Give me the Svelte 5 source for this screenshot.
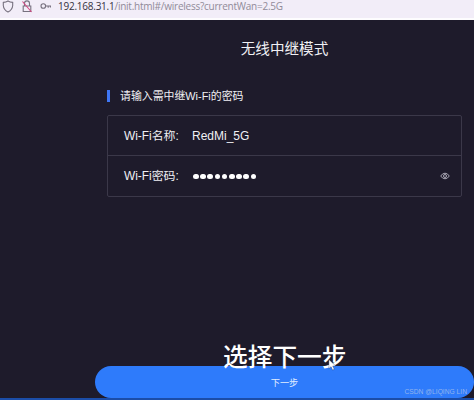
<script lang="ts">
	let host = '192.168.31.1';
	let path = '/init.html#/wireless?currentWan=2.5G';
	let ssid = 'RedMi_5G';
	let password = '123456789';
</script>

<div class="screen">
	<header class="address-bar">
		<svg class="shield" viewBox="0 0 12 13">
			<path d="M6 1 Q8 2.2 10.7 2.4 V5.5 Q10.4 9.8 6 12 Q1.6 9.8 1.3 5.5 V2.4 Q4 2.2 6 1Z" />
		</svg>
		<svg class="lock" viewBox="0 0 12 13">
			<path d="M3.5 6V3.4a2.5 2.5 0 0 1 5 0V6M2.2 6h7.6v5.5H2.2z" />
			<path class="slash" d="M1.5 1.5l9 10.5" />
		</svg>
		<svg class="key" viewBox="0 0 12 10">
			<circle cx="3.3" cy="5" r="2.3" />
			<path d="M5.6 5H11M8.2 5v1.8M10.4 5v1.6" />
		</svg>
		<span class="url"><b>{host}</b>{path}</span>
	</header>

	<main>
		<h1>无线中继模式</h1>
		<h2><span>请输入需中继Wi-Fi的密码</span></h2>
		<div class="fields">
			<div class="field">
				<span class="label">Wi-Fi名称:</span>
				<span class="value">{ssid}</span>
			</div>
			<div class="field">
				<span class="label">Wi-Fi密码:</span>
				<span class="dots">
					{#each password as _}
						<i></i>
					{/each}
				</span>
				<svg class="eye" viewBox="0 0 10 8">
					<path d="M.7 4Q2.5 1.2 5 1.2T9.3 4Q7.5 6.8 5 6.8T.7 4Z" />
					<circle cx="5" cy="4" r="1.5" />
				</svg>
			</div>
		</div>
	</main>

	<button>下一步</button>

	<p class="caption">选择下一步</p>
	<svg class="cursor" viewBox="0 0 10 13">
		<path d="M1 .5v10l2.4-2.2 1.7 3.8 1.8-.8-1.7-3.7h3.4z" />
	</svg>
	<span class="watermark">CSDN @LIQING LIN</span>
</div>

<style>
	:global(body) {
		margin: 0;
	}
	.screen {
		position: relative;
		display: flex;
		flex-direction: column;
		box-sizing: border-box;
		width: 474px;
		height: 400px;
		overflow: hidden;
		background: #1e1b2b;
		border-bottom: 2px solid #1b4da8;
		color: #f0f0f4;
		font-family: 'Liberation Sans', 'Noto Sans CJK SC', sans-serif;
	}
	.address-bar {
		flex: none;
		display: flex;
		align-items: center;
		box-sizing: border-box;
		height: 20px;
		padding: 0 0 6px 2px;
		background: #f2edf8;
		border-bottom: 2px solid #fdfcfe;
	}
	.address-bar svg {
		flex: none;
		fill: none;
		stroke: #77717f;
		stroke-width: 1.1;
	}
	.shield {
		width: 12px;
		height: 13px;
	}
	.lock {
		width: 12px;
		height: 13px;
		margin-left: 7px;
	}
	.address-bar .slash {
		stroke: #d6457f;
	}
	.key {
		width: 12px;
		height: 10px;
		margin-left: 7px;
	}
	.url {
		margin-left: 6px;
		font-family: 'Open Sans', 'Noto Sans', sans-serif;
		font-size: 10px;
		letter-spacing: -0.24px;
		line-height: 13px;
		color: #918b99;
		white-space: nowrap;
	}
	.url b {
		font-weight: 500;
		color: #36323e;
	}
	main {
		flex: 1;
		padding: 0 12px 0 107px;
	}
	h1 {
		margin: 18px 0 0;
		font-size: 14.6px;
		line-height: 22px;
		font-weight: 400;
		text-align: center;
	}
	h2 {
		display: flex;
		align-items: center;
		height: 12px;
		margin: 30px 0 13px;
		padding-left: 11px;
		border-left: 3px solid #3f76f4;
		font-size: 10.9px;
		line-height: 14px;
		font-weight: 400;
		white-space: nowrap;
	}
	h2 span {
		margin-left: -1px;
	}
	.fields {
		border: 1px solid #3b3849;
		border-radius: 2px;
	}
	.field {
		display: flex;
		align-items: center;
		box-sizing: border-box;
		height: 39px;
		padding: 0 11px 0 16px;
		font-size: 12px;
		line-height: 16px;
		white-space: nowrap;
	}
	.field + .field {
		height: 41px;
		border-top: 1px solid #3b3849;
	}
	.label {
		width: 68px;
		font-size: 11.9px;
	}
	.dots {
		display: flex;
		gap: 1.6px;
		padding: 1px 0 0 1px;
	}
	.dots i {
		width: 5.6px;
		height: 5.6px;
		border-radius: 50%;
		background: #fff;
	}
	.eye {
		width: 10px;
		height: 8px;
		margin-left: auto;
		fill: none;
		stroke: #aaa7b5;
		stroke-width: 1;
	}
	button {
		flex: none;
		height: 32px;
		margin: 0 0 0 95px;
		padding: 0;
		border: 0;
		border-radius: 16px;
		background: #2e7bfb;
		color: #e3edff;
		font-family: inherit;
		font-size: 9.2px;
	}
	.caption {
		position: absolute;
		top: 342px;
		left: 223px;
		margin: 0;
		font-size: 24.7px;
		line-height: 32px;
		font-weight: 500;
		color: #fff;
		white-space: nowrap;
	}
	.cursor {
		position: absolute;
		top: 359px;
		left: 328px;
		width: 9px;
		height: 12px;
		fill: #fff;
		stroke: #26354f;
		stroke-width: 0.4;
	}
	.watermark {
		position: absolute;
		right: 7px;
		bottom: 2px;
		font-size: 6.7px;
		line-height: 9px;
		color: #92b3ee;
	}
</style>
